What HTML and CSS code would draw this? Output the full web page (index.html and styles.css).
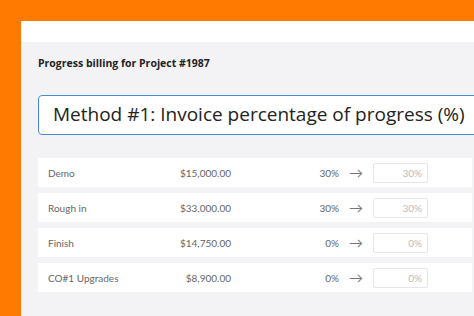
FILE: index.html
```html
<!DOCTYPE html>
<html lang="en">
<head>
    <meta charset="UTF-8">
    <meta name="viewport" content="width=device-width, initial-scale=1.0">
    <title>Progress Billing</title>
    <link rel="stylesheet" href="styles.css">
</head>
<body>
    <div class="panel">
        <div class="panel-top"></div>
        <div class="panel-body">
            <h1 class="title">Progress billing for Project #1987</h1>
            <!-- Billing method select -->
            <div class="method-select">Method #1: Invoice percentage of progress (%)</div>
            <div class="rows">
                <div class="row">
                    <span class="row-name">Demo</span>
                    <span class="row-amount">$15,000.00</span>
                    <span class="row-pct">30%</span>
                    <span class="row-arrow">&rarr;</span>
                    <span class="row-input">30%</span>
                </div>
                <div class="row">
                    <span class="row-name">Rough in</span>
                    <span class="row-amount">$33,000.00</span>
                    <span class="row-pct">30%</span>
                    <span class="row-arrow">&rarr;</span>
                    <span class="row-input">30%</span>
                </div>
                <div class="row">
                    <span class="row-name">Finish</span>
                    <span class="row-amount">$14,750.00</span>
                    <span class="row-pct">0%</span>
                    <span class="row-arrow">&rarr;</span>
                    <span class="row-input">0%</span>
                </div>
                <div class="row">
                    <span class="row-name">CO#1 Upgrades</span>
                    <span class="row-amount">$8,900.00</span>
                    <span class="row-pct">0%</span>
                    <span class="row-arrow">&rarr;</span>
                    <span class="row-input">0%</span>
                </div>
            </div>
        </div>
    </div>
</body>
</html>
```

FILE: styles.css
```css
body {
    background-color: #ff7a00; /* Orange frame */
    font-family: "Open Sans", Arial, sans-serif;
    margin: 0;
    padding: 21px 0 0 21px;
    height: 316px;
    box-sizing: border-box;
    overflow: hidden;
}

.panel {
    background-color: #fff;
    height: 100%;
    display: flex;
    flex-direction: column;
}

.panel-top {
    height: 21px;
    background-color: #fff;
}

.panel-body {
    flex: 1;
    background-color: #f3f3f5;
    padding: 13px 0 0 17px;
    overflow: hidden;
}

.title {
    margin: 0;
    font-size: 10.5px;
    font-weight: 700;
    color: #222;
    line-height: 16px;
}

.method-select {
    margin-top: 24px;
    height: 40px;
    margin-right: -20px;
    border: 1.5px solid #4a8ad8;
    border-radius: 4px;
    background-color: #fff;
    padding-left: 14px;
    font-size: 19px;
    color: #222;
    line-height: 37px;
    white-space: nowrap;
    box-sizing: border-box;
}

.rows {
    margin-top: 23px;
    display: flex;
    flex-direction: column;
    gap: 6px;
    margin-right: 2px;
}

.row {
    display: flex;
    align-items: center;
    height: 29px;
    background-color: #fff;
    font-family: Lato, "Open Sans", sans-serif;
    font-size: 10px;
    color: #666;
}

.row-name {
    width: 110px;
    padding-left: 10px;
}

.row-amount {
    width: 73px;
    text-align: right;
}

.row-pct {
    width: 108px;
    text-align: right;
}

.row-arrow {
    width: 34px;
    text-align: center;
    font-size: 14px;
    color: #777;
}

.row-input {
    width: 55px;
    height: 20px;
    border: 1px solid #e6e6e6;
    border-radius: 2px;
    box-sizing: border-box;
    text-align: right;
    padding-right: 5px;
    line-height: 18px;
    color: #bbb;
}
```
